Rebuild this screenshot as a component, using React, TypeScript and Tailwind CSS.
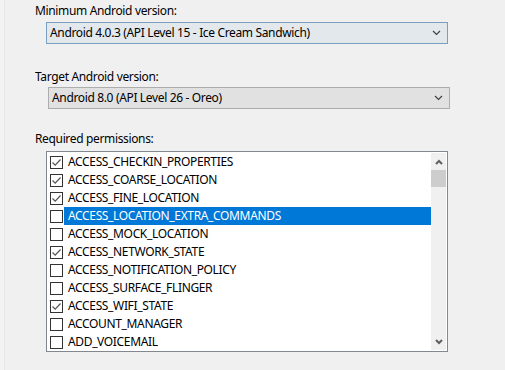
const perms = [
  { name: "ACCESS_CHECKIN_PROPERTIES", checked: true },
  { name: "ACCESS_COARSE_LOCATION", checked: true },
  { name: "ACCESS_FINE_LOCATION", checked: true },
  { name: "ACCESS_LOCATION_EXTRA_COMMANDS", checked: false, selected: true },
  { name: "ACCESS_MOCK_LOCATION", checked: false },
  { name: "ACCESS_NETWORK_STATE", checked: true },
  { name: "ACCESS_NOTIFICATION_POLICY", checked: false },
  { name: "ACCESS_SURFACE_FLINGER", checked: false },
  { name: "ACCESS_WIFI_STATE", checked: true },
  { name: "ACCOUNT_MANAGER", checked: false },
  { name: "ADD_VOICEMAIL", checked: false },
];

function Chevron({ up = false, className = "" }: { up?: boolean; className?: string }) {
  return (
    <svg width="9" height="6" viewBox="0 0 9 6" className={className}>
      <polyline
        points={up ? "1,5 4.5,1.5 8,5" : "1,1 4.5,4.5 8,1"}
        fill="none"
        stroke="currentColor"
        strokeWidth="1.2"
      />
    </svg>
  );
}

function ScrollArrow({ up = false }: { up?: boolean }) {
  return (
    <svg width="8" height="6" viewBox="0 0 8 6">
      <polyline
        points={up ? "1,5 4,2 7,5" : "1,1 4,4 7,1"}
        fill="none"
        stroke="#606060"
        strokeWidth="2"
      />
    </svg>
  );
}

function Combo({ text, active }: { text: string; active?: boolean }) {
  return (
    <div
      className={
        "flex h-[22px] w-[402px] items-center justify-between border pl-[3px] pr-[6px] " +
        (active ? "border-[#7a9ebf] bg-[#e3e8ed]" : "border-[#adadad] bg-[#e1e1e1]")
      }
    >
      <span className="text-black">{text}</span>
      <Chevron className="text-[#404040]" />
    </div>
  );
}

export default function App() {
  return (
    <div
      className="flex h-[370px] w-[505px] overflow-hidden bg-[#f0f0f0] text-[12px] leading-4 tracking-[-0.35px] text-black"
      style={{ fontFamily: '"Noto Sans", "Open Sans", sans-serif' }}
    >
      <div className="w-[5px] border-r border-[#e6e6e6] bg-[#f3f3f3]" />
      <div className="flex flex-col pl-[30px]">
        <div className="mt-[3px]">Minimum Android version:</div>
        <div className="ml-[11px] mt-[3px]">
          <Combo text="Android 4.0.3 (API Level 15 - Ice Cream Sandwich)" active />
        </div>

        <div className="mt-[25px]">Target Android version:</div>
        <div className="ml-[13px] mt-[2px]">
          <Combo text="Android 8.0 (API Level 26 - Oreo)" />
        </div>

        <div className="mt-[22px]">Required permissions:</div>
        <div className="ml-[11px] mt-[4px] flex h-[201px] w-[402px] border border-[#828790] bg-white p-px">
          <div className="flex flex-1 flex-col">
            {perms.map((p) => (
              <div key={p.name} className="flex h-[18px] items-center">
                <div className="flex w-[16px] justify-start pl-[2px]">
                  <div className="flex h-[13px] w-[13px] items-center justify-center border border-[#333] bg-white">
                    {p.checked && (
                      <svg width="11" height="11" viewBox="0 0 11 11">
                        <polyline
                          points="1.5,5.5 4.2,8.2 9.5,2.5"
                          fill="none"
                          stroke="#555"
                          strokeWidth="1.2"
                        />
                      </svg>
                    )}
                  </div>
                </div>
                <div
                  className={
                    "flex h-[18px] flex-1 items-center pl-[4px] " +
                    (p.selected ? "bg-[#0078d7] text-white" : "")
                  }
                >
                  {p.name}
                </div>
              </div>
            ))}
          </div>
          <div className="flex w-[15px] flex-col bg-[#f0f0f0]">
            <div className="flex h-[17px] items-center justify-center">
              <ScrollArrow up />
            </div>
            <div className="h-[17px] bg-[#cdcdcd]" />
            <div className="flex-1" />
            <div className="flex h-[17px] items-center justify-center">
              <ScrollArrow />
            </div>
          </div>
        </div>
      </div>
    </div>
  );
}
